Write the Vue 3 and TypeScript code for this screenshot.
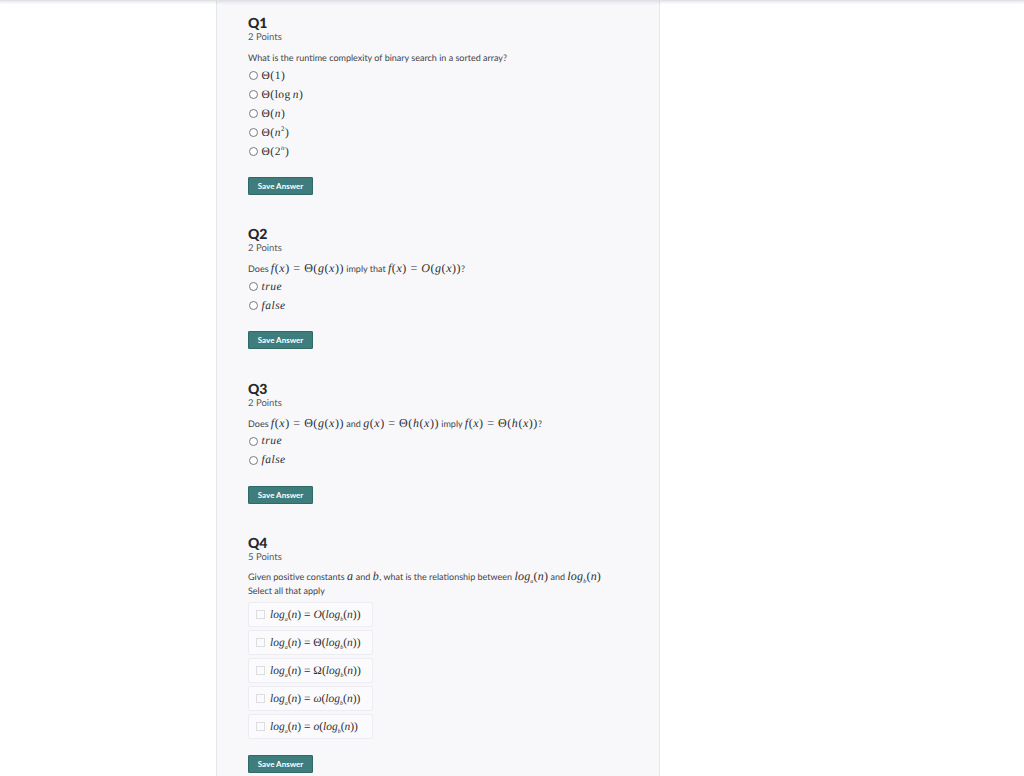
<script setup lang="ts">
interface Question {
  id: string
  points: string
  prompt: string
  hint?: string
  kind: 'radio' | 'check'
  options: string[]
}

const logA = '<i>log</i><sub><i>a</i></sub>(<i>n</i>)'
const logB = '<i>log</i><sub><i>b</i></sub>(<i>n</i>)'
const fx = '<span class="m"><i>f</i>(<i>x</i>) = '
const thetaG = 'Θ(<i>g</i>(<i>x</i>))'
const thetaH = 'Θ(<i>h</i>(<i>x</i>))'

const questions: Question[] = [
  {
    id: 'Q1',
    points: '2 Points',
    prompt: 'What is the runtime complexity of binary search in a sorted array?',
    kind: 'radio',
    options: [
      'Θ(1)',
      'Θ(log <i>n</i>)',
      'Θ(<i>n</i>)',
      'Θ(<i>n</i><sup>2</sup>)',
      'Θ(2<sup><i>n</i></sup>)',
    ],
  },
  {
    id: 'Q2',
    points: '2 Points',
    prompt: `Does ${fx}${thetaG}</span> imply that ${fx}<i>O</i>(<i>g</i>(<i>x</i>))</span>?`,
    kind: 'radio',
    options: ['<i>true</i>', '<i>false</i>'],
  },
  {
    id: 'Q3',
    points: '2 Points',
    prompt: `Does ${fx}${thetaG}</span> and <span class="m"><i>g</i>(<i>x</i>) = ${thetaH}</span> imply ${fx}${thetaH}</span>?`,
    kind: 'radio',
    options: ['<i>true</i>', '<i>false</i>'],
  },
  {
    id: 'Q4',
    points: '5 Points',
    prompt: `Given positive constants <span class="m"><i>a</i></span> and <span class="m"><i>b</i></span>, what is the relationship between <span class="m tight">${logA}</span> and <span class="m tight">${logB}</span>`,
    hint: 'Select all that apply',
    kind: 'check',
    options: [
      `${logA} = <i>O</i>(${logB})`,
      `${logA} = Θ(${logB})`,
      `${logA} = Ω(${logB})`,
      `${logA} = <i>ω</i>(${logB})`,
      `${logA} = <i>o</i>(${logB})`,
    ],
  },
]
</script>

<template>
  <div class="page">
    <div class="topbar" />
    <main class="panel">
      <section v-for="q in questions" :key="q.id" class="question" :class="{ 'has-hint': q.hint }">
        <h2 class="title">{{ q.id }}</h2>
        <div class="points">{{ q.points }}</div>
        <p class="prompt" v-html="q.prompt" />
        <p v-if="q.hint" class="hint">{{ q.hint }}</p>
        <ul v-if="q.kind === 'radio'" class="radios">
          <li v-for="opt in q.options" :key="opt" class="radio-row">
            <span class="radio" />
            <span class="radio-label" v-html="opt" />
          </li>
        </ul>
        <ul v-else class="checks">
          <li v-for="opt in q.options" :key="opt" class="check-row">
            <span class="check" />
            <span class="check-label" v-html="opt" />
          </li>
        </ul>
        <button class="save">Save Answer</button>
      </section>
    </main>
  </div>
</template>

<style>
html,
body {
  background: #fff;
  overflow: hidden;
}
</style>

<style scoped>
.page {
  position: relative;
  height: 776px;
  overflow: hidden;
  font-family: Lato, "Open Sans", sans-serif;
  color: #3f4247;
  text-rendering: geometricPrecision;
}

.topbar {
  position: absolute;
  top: 0;
  left: 0;
  right: 0;
  height: 1px;
  background: #dfe1e6;
  box-shadow: 0 1px 3px rgba(40, 50, 70, 0.28);
}

.panel {
  width: 444px;
  min-height: 776px;
  margin-left: 216px;
  padding: 15px 32px 0 31px;
  box-sizing: border-box;
  background: #f8f8fb;
  border-left: 1px solid #e6e7ec;
  border-right: 1px solid #e6e7ec;
}

.question {
  margin-bottom: 31.5px;
}

.question:first-child {
  margin-bottom: 31px;
}

.title {
  margin: 0;
  font-size: 14px;
  line-height: 16px;
  font-weight: 900;
  color: #25282d;
}

.points {
  font-size: 9.5px;
  line-height: 13px;
  color: #55585d;
}

.prompt {
  margin: 7px 0 0;
  height: 14px;
  font-size: 9px;
  line-height: 14px;
  white-space: nowrap;
}

.has-hint .prompt {
  margin-top: 6px;
}

.hint {
  margin: 0;
  font-size: 9px;
  line-height: 14px;
}

.radios,
.checks {
  list-style: none;
  margin: 0;
  padding: 0;
}

.radios {
  margin-top: 1px;
}

.radio-row {
  display: flex;
  align-items: center;
  gap: 4px;
  height: 19px;
}

.radio {
  width: 9px;
  height: 9px;
  margin-left: 0.5px;
  box-sizing: border-box;
  border: 1px solid #77797d;
  border-radius: 50%;
  background: #fff;
  flex: none;
}

.radio-label {
  font-family: "Liberation Serif", serif;
  font-size: 11.5px;
  line-height: 14px;
  letter-spacing: 0.5px;
  word-spacing: -1.5px;
  color: #2c2e32;
}

.checks {
  margin-top: 4px;
  display: flex;
  flex-direction: column;
  gap: 3px;
}

.check-row {
  display: flex;
  align-items: center;
  gap: 5px;
  width: 125px;
  height: 25px;
  box-sizing: border-box;
  padding-left: 7px;
  background: #fbfbfd;
  border: 1px solid #ecedf2;
  border-radius: 2px;
  white-space: nowrap;
}

.check {
  width: 9px;
  height: 9px;
  box-sizing: border-box;
  border: 1px solid #dcdde1;
  background: #fbfbfd;
  flex: none;
}

.check-label {
  font-family: "Liberation Serif", serif;
  font-size: 11.5px;
  line-height: 14px;
  color: #2c2e32;
}

.prompt :deep(.m) {
  font-family: "Liberation Serif", serif;
  font-size: 12px;
  line-height: 0;
  letter-spacing: 0.55px;
  color: #2c2e32;
}

.prompt :deep(.m.tight) {
  letter-spacing: 0.2px;
}

.radio-label :deep(sup) {
  font-size: 7px;
  line-height: 0;
}

.check-label :deep(sub),
.prompt :deep(sub) {
  font-size: 6px;
  line-height: 0;
}

.save {
  display: block;
  width: 65px;
  height: 18px;
  margin-top: 16px;
  padding: 0;
  border: 1px solid #2f6a69;
  border-radius: 1px;
  background: #3f7d7c;
  color: #fff;
  font-family: Lato, sans-serif;
  font-size: 8px;
  font-weight: 700;
}
</style>
